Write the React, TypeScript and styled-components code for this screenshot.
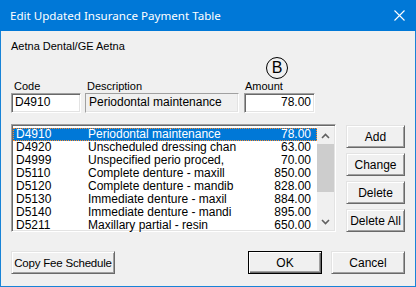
import styled, { createGlobalStyle } from "styled-components";

const GlobalStyle = createGlobalStyle`
  html, body {
    margin: 0;
    padding: 0;
    background: #ffffff;
  }
`;

const Window = styled.div`
  width: 416px;
  height: 287px;
  box-sizing: border-box;
  border: 1px solid #1883d7;
  border-top: none;
  background: #f0f0f0;
  display: flex;
  flex-direction: column;
  font-family: "Liberation Sans", Arial, sans-serif;
  font-size: 11px;
  color: #000;
`;

const TitleBar = styled.div`
  height: 31px;
  margin: 0 -1px;
  background: #0078d7;
  color: #fff;
  display: flex;
  align-items: center;
  justify-content: space-between;
  padding: 0 10px 0 10px;
  font-family: "Noto Sans", "Open Sans", sans-serif;
  font-size: 11.6px;
  flex-shrink: 0;
`;

const CloseIcon = () => (
  <svg width="11" height="11" viewBox="0 0 11 11" style={{ marginRight: 1 }}>
    <path d="M0.5 0.5 L10.5 10.5 M10.5 0.5 L0.5 10.5" stroke="#fff" strokeWidth="1.1" />
  </svg>
);

const Body = styled.div`
  flex: 1;
  padding: 9px 10px 0 9px;
  display: flex;
  flex-direction: column;
`;

const Provider = styled.div`
  height: 13px;
  line-height: 13px;
  padding-left: 1px;
`;

const Fields = styled.div`
  position: relative;
  margin-top: 26px;
  display: grid;
  grid-template-columns: 70px 154px 72px;
  column-gap: 4px;
  row-gap: 0;
  padding-left: 1px;
  & > :nth-child(3n) {
    margin-left: 1px;
  }
`;

const Label = styled.div<{ $indent: number }>`
  height: 14px;
  line-height: 14px;
  padding-left: ${(p) => p.$indent}px;
`;

const Field = styled.div<{ $readonly?: boolean; $right?: boolean }>`
  height: 20px;
  box-sizing: border-box;
  line-height: 17px;
  padding: 0 3px;
  text-align: ${(p) => (p.$right ? "right" : "left")};
  background: ${(p) => (p.$readonly ? "#f0f0f0" : "#fff")};
  border-top: 1px solid #a0a0a0;
  border-left: 1px solid #a0a0a0;
  border-bottom: 1px solid #fff;
  border-right: 1px solid #fff;
  box-shadow: ${(p) =>
    p.$readonly
      ? "inset -1px -1px 0 #e3e3e3"
      : "inset 1px 1px 0 #696969, inset -1px -1px 0 #e3e3e3"};
  white-space: nowrap;
  overflow: hidden;
  font-size: 12px;
`;

const Badge = styled.div`
  position: absolute;
  left: 256px;
  top: -22px;
  width: 22px;
  height: 22px;
  box-sizing: border-box;
  border: 1.6px solid #000;
  border-radius: 50%;
  display: flex;
  align-items: center;
  justify-content: center;
  font-family: "Liberation Sans", Arial, sans-serif;
  font-size: 16px;
  line-height: 1;
`;

const ListRow = styled.div`
  margin-top: 11px;
  display: flex;
  gap: 10px;
  padding-left: 1px;
`;

const ListBox = styled.div`
  width: 325px;
  height: 108px;
  box-sizing: border-box;
  background: #fff;
  border-top: 1px solid #a0a0a0;
  border-left: 1px solid #a0a0a0;
  border-bottom: 1px solid #fff;
  border-right: 1px solid #fff;
  box-shadow: inset 1px 1px 0 #696969, inset -1px -1px 0 #e3e3e3;
  padding: 2px 1px 1px 1px;
  display: flex;
`;

const Rows = styled.div`
  flex: 1;
  display: flex;
  flex-direction: column;
  padding-top: 1px;
`;

const Row = styled.div<{ $selected?: boolean }>`
  height: 13px;
  line-height: 13px;
  font-size: 12px;
  display: grid;
  grid-template-columns: 72px 1fr 60px;
  padding: 0 6px 0 3px;
  background: ${(p) => (p.$selected ? "#0078d7" : "transparent")};
  color: ${(p) => (p.$selected ? "#fff" : "#000")};
  outline: ${(p) => (p.$selected ? "1px dotted #ff8a28" : "none")};
  outline-offset: -1px;
  white-space: nowrap;
  & span:last-child {
    text-align: right;
  }
`;

const ScrollBar = styled.div`
  width: 17px;
  background: #f0f0f0;
  display: flex;
  flex-direction: column;
  align-items: center;
`;

const Arrow = styled.div`
  height: 17px;
  width: 17px;
  display: flex;
  align-items: center;
  justify-content: center;
`;

const Thumb = styled.div`
  width: 17px;
  height: 48px;
  background: #cdcdcd;
`;

const Track = styled.div`
  flex: 1;
`;

const Chevron = ({ up }: { up?: boolean }) => (
  <svg width="9" height="6" viewBox="0 0 9 6">
    <path
      d={up ? "M1 5 L4.5 1.5 L8 5" : "M1 1 L4.5 4.5 L8 1"}
      stroke="#606060"
      strokeWidth="1.6"
      fill="none"
    />
  </svg>
);

const ButtonColumn = styled.div`
  display: flex;
  flex-direction: column;
  gap: 5px;
  padding-top: 1px;
`;

const Button = styled.button<{ $width: number; $default?: boolean }>`
  width: ${(p) => p.$width}px;
  height: 23px;
  box-sizing: border-box;
  padding: 0;
  margin: 0;
  white-space: nowrap;
  font-family: "Liberation Sans", Arial, sans-serif;
  font-size: 12px;
  color: #000;
  background: #f0f0f0;
  border-top: 1px solid ${(p) => (p.$default ? "#000" : "#e3e3e3")};
  border-left: 1px solid ${(p) => (p.$default ? "#000" : "#e3e3e3")};
  border-bottom: 1px solid ${(p) => (p.$default ? "#000" : "#696969")};
  border-right: 1px solid ${(p) => (p.$default ? "#000" : "#696969")};
  box-shadow: ${(p) =>
    p.$default
      ? "inset 1px 1px 0 #fff, inset -1px -1px 0 #696969, inset -2px -2px 0 #a0a0a0"
      : "inset 1px 1px 0 #fff, inset -1px -1px 0 #a0a0a0"};
`;

const WideButton = styled(Button)`
  font-size: 11.5px;
  letter-spacing: -0.2px;
`;

const Footer = styled.div`
  margin-top: 19px;
  display: flex;
  align-items: center;
  padding-left: 1px;
`;

const Spacer = styled.div`
  flex: 1;
`;

const FooterRight = styled.div`
  display: flex;
  gap: 9px;
`;

const items: [string, string, string][] = [
  ["D4910", "Periodontal maintenance", "78.00"],
  ["D4920", "Unscheduled dressing chan", "63.00"],
  ["D4999", "Unspecified perio proced,", "70.00"],
  ["D5110", "Complete denture - maxill", "850.00"],
  ["D5120", "Complete denture - mandib", "828.00"],
  ["D5130", "Immediate denture - maxil", "884.00"],
  ["D5140", "Immediate denture - mandi", "895.00"],
  ["D5211", "Maxillary partial - resin", "650.00"],
];

export default function App() {
  return (
    <>
      <GlobalStyle />
      <Window>
        <TitleBar>
          <span>Edit Updated Insurance Payment Table</span>
          <CloseIcon />
        </TitleBar>
        <Body>
          <Provider>Aetna Dental/GE Aetna</Provider>
          <Fields>
            <Label $indent={3}>Code</Label>
            <Label $indent={2}>Description</Label>
            <Label $indent={1}>Amount</Label>
            <Field>D4910</Field>
            <Field $readonly>Periodontal maintenance</Field>
            <Field $right>78.00</Field>
            <Badge>B</Badge>
          </Fields>
          <ListRow>
            <ListBox>
              <Rows>
                {items.map(([code, desc, amt], i) => (
                  <Row key={code} $selected={i === 0}>
                    <span>{code}</span>
                    <span>{desc}</span>
                    <span>{amt}</span>
                  </Row>
                ))}
              </Rows>
              <ScrollBar>
                <Arrow>
                  <Chevron up />
                </Arrow>
                <Thumb />
                <Track />
                <Arrow>
                  <Chevron />
                </Arrow>
              </ScrollBar>
            </ListBox>
            <ButtonColumn>
              <Button $width={59}>Add</Button>
              <Button $width={59}>Change</Button>
              <Button $width={59}>Delete</Button>
              <Button $width={59}>Delete All</Button>
            </ButtonColumn>
          </ListRow>
          <Footer>
            <WideButton $width={104}>Copy Fee Schedule</WideButton>
            <Spacer />
            <FooterRight>
              <Button $width={74} $default>
                OK
              </Button>
              <Button $width={74}>Cancel</Button>
            </FooterRight>
          </Footer>
        </Body>
      </Window>
    </>
  );
}
